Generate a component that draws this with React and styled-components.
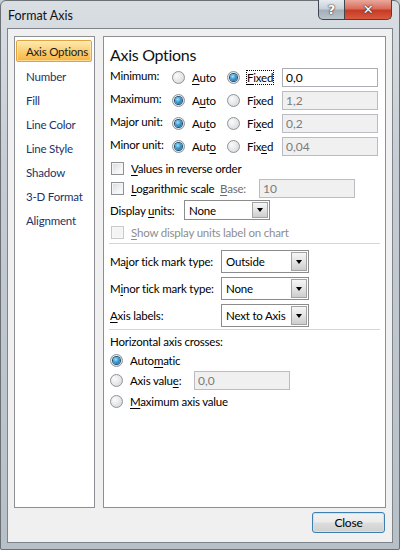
import React from 'react';
import styled, { createGlobalStyle, css } from 'styled-components';

const GlobalStyle = createGlobalStyle`
  html, body {
    margin: 0;
    padding: 0;
    background: #c4ccd4;
  }
  body {
    font-family: Lato, "Noto Sans", sans-serif;
    font-size: 11.5px;
    letter-spacing: -0.2px;
    color: #000;
  }
`;

const Window = styled.div`
  box-sizing: border-box;
  width: 400px;
  height: 550px;
  display: flex;
  flex-direction: column;
  padding: 0 6px 6px 6px;
  border: 1px solid #6b7077;
  border-radius: 6px 6px 2px 2px;
  background: linear-gradient(180deg, #d9dee3 0%, #c5ccd3 30%, #b7bfc7 100%);
`;

const TitleBar = styled.div`
  height: 27px;
  display: flex;
  align-items: flex-start;
  justify-content: space-between;
`;

const Title = styled.span`
  margin-top: 7px;
  margin-left: 1px;
  font-size: 12.5px;
  letter-spacing: 0;
  color: #111;
`;

const CaptionButtons = styled.div`
  display: flex;
  margin-top: -1px;
  margin-right: 1px;
`;

const CaptionButton = styled.div`
  box-sizing: border-box;
  height: 20px;
  width: ${(p) => p.$width}px;
  display: flex;
  align-items: center;
  justify-content: center;
  border: 1px solid #3f4650;
  border-top: none;
  color: #fff;
  font-family: "DejaVu Sans", sans-serif;
  font-weight: bold;
  font-size: 13px;
  text-shadow: 0 0 2px #333, 0 0 1px #222;
  ${(p) => p.$close
    ? css`
      border-left: none;
      border-radius: 0 0 5px 0;
      background: linear-gradient(180deg, #e9a99b 0%, #d86d5c 45%, #c73b26 55%, #d85a3e 100%);
    `
    : css`
      border-radius: 0 0 0 5px;
      background: linear-gradient(180deg, #e6ebef 0%, #c9d1d8 45%, #a5afb9 55%, #b9c3cc 100%);
    `}
`;

const Client = styled.div`
  flex: 1;
  display: flex;
  flex-direction: column;
  background: #f0f0f0;
  border: 1px solid #7d848c;
  padding: 7px 6px 9px 6px;
`;

const Body = styled.div`
  flex: 1;
  display: flex;
  gap: 8px;
`;

const Nav = styled.div`
  box-sizing: border-box;
  width: 82px;
  background: #fff;
  border: 1px solid #8e8f94;
  padding: 3px 2px 0 1px;
  display: flex;
  flex-direction: column;
`;

const NavItem = styled.div`
  box-sizing: border-box;
  height: 24px;
  padding-left: 10px;
  display: flex;
  align-items: center;
  color: #1c336a;
  white-space: nowrap;
  ${(p) => p.$active && css`
    height: 22px;
    margin-bottom: 2px;
    padding-left: 9px;
    color: #1a1a1a;
    border: 1px solid #e3a33c;
    border-radius: 2px;
    background: linear-gradient(180deg, #fde9b4 0%, #fcd27a 45%, #f8b443 100%);
    box-shadow: inset 0 0 0 1px rgba(255, 240, 200, 0.6);
  `}
`;

const Panel = styled.div`
  box-sizing: border-box;
  flex: 1;
  background: #fff;
  border: 1px solid #8e8f94;
  padding: 8px 5px 0 6px;
  display: flex;
  flex-direction: column;
`;

const Heading = styled.div`
  height: 21px;
  font-size: 16px;
  letter-spacing: -0.3px;
  line-height: 20px;
  color: #111;
`;

const UnitRow = styled.div`
  height: 23px;
  display: grid;
  grid-template-columns: 62px 55px 55px 96px;
  align-items: center;
`;

const Row = styled.div`
  height: ${(p) => p.$h}px;
  display: flex;
  align-items: center;
  gap: ${(p) => p.$gap || 0}px;
  padding-left: ${(p) => p.$indent || 0}px;
  color: ${(p) => (p.$disabled ? '#8d8d8d' : '#000')};
`;

const Label = styled.span`
  width: ${(p) => (p.$w ? `${p.$w}px` : 'auto')};
  flex-shrink: 0;
  margin-top: ${(p) => (p.$raise ? '-4px' : '0')};
  margin-left: ${(p) => p.$ml || 0}px;
  white-space: nowrap;
  color: ${(p) => (p.$dim ? '#6d6d6d' : 'inherit')};
`;

const Option = styled.label`
  display: flex;
  align-items: center;
  gap: 7px;
  white-space: nowrap;
`;

const OptionText = styled.span`
  ${(p) => p.$focus && css`
    outline: 1px dotted #000;
    outline-offset: 0;
  `}
`;

const Radio = styled.span`
  box-sizing: border-box;
  width: 13px;
  height: 13px;
  border-radius: 50%;
  border: 1px solid #8f9397;
  background: radial-gradient(circle at 35% 35%, #fbfbfb 0%, #e2e3e5 60%, #cfd1d4 100%);
  display: flex;
  align-items: center;
  justify-content: center;
  flex-shrink: 0;
  &::after {
    content: '';
    display: ${(p) => (p.$checked ? 'block' : 'none')};
    width: 7px;
    height: 7px;
    border-radius: 50%;
    background: radial-gradient(circle at 40% 35%, #a8e4fb 0%, #3c9bd0 45%, #175a8a 100%);
    box-shadow: 0 0 0 1px #1d4f74;
  }
`;

const Check = styled.span`
  box-sizing: border-box;
  width: 13px;
  height: 13px;
  flex-shrink: 0;
  border: 1px solid ${(p) => (p.$disabled ? '#c9c9c9' : '#8f9397')};
  background: ${(p) => (p.$disabled
    ? '#f4f4f4'
    : 'linear-gradient(135deg, #d7d9dc 0%, #f2f3f4 60%, #ffffff 100%)')};
  box-shadow: inset 0 0 0 1px ${(p) => (p.$disabled ? '#f7f7f7' : '#f4f4f4')};
`;

const TextBox = styled.div`
  box-sizing: border-box;
  width: ${(p) => p.$w}px;
  height: 19px;
  padding: 0 3px;
  display: flex;
  align-items: center;
  border: 1px solid ${(p) => (p.$disabled ? '#b9bcc2' : '#abadb3')};
  background: ${(p) => (p.$disabled ? '#f0f0f0' : '#fff')};
  color: ${(p) => (p.$disabled ? '#7b7b7b' : '#000')};
  font-size: 12px;
  letter-spacing: 0;
`;

const Select = styled.div`
  box-sizing: border-box;
  width: ${(p) => p.$w}px;
  height: ${(p) => p.$h}px;
  display: flex;
  align-items: stretch;
  border: 1px solid #8c8c8c;
  background: #fff;
  padding: 1px;
`;

const SelectValue = styled.span`
  flex: 1;
  display: flex;
  align-items: center;
  padding-left: 3px;
  white-space: nowrap;
  overflow: hidden;
`;

const DropButton = styled.span`
  box-sizing: border-box;
  width: 16px;
  flex-shrink: 0;
  display: flex;
  align-items: center;
  justify-content: center;
  border: 1px solid #a3a3a3;
  background: linear-gradient(180deg, #f6f6f6 0%, #e4e4e4 50%, #cdcdcd 100%);
  &::after {
    content: '';
    border-left: 3.5px solid transparent;
    border-right: 3.5px solid transparent;
    border-top: 4px solid #000;
  }
`;

const Separator = styled.div`
  height: 1px;
  margin: ${(p) => p.$m || '0'};
  margin-left: -1px;
  width: 271px;
  background: #d5d5d5;
`;

const Footer = styled.div`
  display: flex;
  justify-content: flex-end;
  padding-top: 4px;
  padding-right: 1px;
`;

const Button = styled.button`
  box-sizing: border-box;
  width: 73px;
  height: 21px;
  font-family: inherit;
  font-size: 12px;
  letter-spacing: inherit;
  color: #000;
  border: 1px solid #3c7fb1;
  border-radius: 3px;
  background: linear-gradient(180deg, #f2f2f2 0%, #ebebeb 49%, #dddddd 51%, #cfcfcf 100%);
  box-shadow: inset 0 0 0 1px #c1e6f9;
  padding: 0;
`;

const Accel = styled.span`
  text-decoration: underline;
  text-underline-offset: 2px;
`;

// text with one underlined access key, e.g. k("Auto", 1) -> A_u_to
const k = (text, i) => (
  <>
    {text.slice(0, i)}
    <Accel>{text[i]}</Accel>
    {text.slice(i + 1)}
  </>
);

const navItems = ['Axis Options', 'Number', 'Fill', 'Line Color', 'Line Style', 'Shadow', '3-D Format', 'Alignment'];

const unitRows = [
  { label: 'Minimum:', key: 0, autoOn: false, value: '0,0', enabled: true },
  { label: 'Maximum:', key: 1, autoOn: true, value: '1,2' },
  { label: 'Major unit:', key: 2, autoOn: true, value: '0,2' },
  { label: 'Minor unit:', key: 3, autoOn: true, value: '0,04' },
];

const tickRows = [
  { label: k('Major tick mark type:', 2), value: 'Outside' },
  { label: k('Minor tick mark type:', 1), value: 'None' },
  { label: k('Axis labels:', 0), value: 'Next to Axis' },
];

export default function App() {
  return (
    <>
      <GlobalStyle />
      <Window>
        <TitleBar>
          <Title>Format Axis</Title>
          <CaptionButtons>
            <CaptionButton $width={27}>?</CaptionButton>
            <CaptionButton $width={47} $close>✕</CaptionButton>
          </CaptionButtons>
        </TitleBar>
        <Client>
          <Body>
            <Nav>
              {navItems.map((item, i) => (
                <NavItem key={item} $active={i === 0}>{item}</NavItem>
              ))}
            </Nav>
            <Panel>
              <Heading>Axis Options</Heading>
              {unitRows.map((r) => (
                <UnitRow key={r.label}>
                  <Label $raise>{r.label}</Label>
                  <Option>
                    <Radio $checked={r.autoOn} />
                    <span>{k('Auto', r.key)}</span>
                  </Option>
                  <Option>
                    <Radio $checked={!r.autoOn} />
                    <OptionText $focus={!r.autoOn}>{k('Fixed', r.key)}</OptionText>
                  </Option>
                  <TextBox $w={96} $disabled={!r.enabled}>{r.value}</TextBox>
                </UnitRow>
              ))}
              <Row $h={20} $gap={7} $indent={1}>
                <Check />
                <span>{k('Values in reverse order', 0)}</span>
              </Row>
              <Row $h={20} $indent={1}>
                <Check />
                <Label $w={89} $ml={7}>{k('Logarithmic scale', 0)}</Label>
                <Label $w={39} $dim>{k('Base:', 0)}</Label>
                <TextBox $w={96} $disabled>10</TextBox>
              </Row>
              <Row $h={24}>
                <Label $w={74}>{k('Display units:', 8)}</Label>
                <Select $w={86} $h={20}>
                  <SelectValue>None</SelectValue>
                  <DropButton />
                </Select>
              </Row>
              <Row $h={21} $gap={7} $indent={1} $disabled>
                <Check $disabled />
                <span>{k('Show display units label on chart', 0)}</span>
              </Row>
              <Separator $m="0 0 4px 0" />
              {tickRows.map((r, i) => (
                <Row key={i} $h={27}>
                  <Label $w={111}>{r.label}</Label>
                  <Select $w={88} $h={23}>
                    <SelectValue>{r.value}</SelectValue>
                    <DropButton />
                  </Select>
                </Row>
              ))}
              <Separator $m="0 0 2px 0" />
              <Row $h={19}>Horizontal axis crosses:</Row>
              <Row $h={18} $gap={7}>
                <Radio $checked />
                <span>{k('Automatic', 4)}</span>
              </Row>
              <Row $h={22} $gap={7}>
                <Radio />
                <Label $w={57}>{k('Axis value:', 9)}</Label>
                <TextBox $w={96} $disabled>0,0</TextBox>
              </Row>
              <Row $h={20} $gap={7}>
                <Radio />
                <span>{k('Maximum axis value', 0)}</span>
              </Row>
            </Panel>
          </Body>
          <Footer>
            <Button type="button">Close</Button>
          </Footer>
        </Client>
      </Window>
    </>
  );
}
